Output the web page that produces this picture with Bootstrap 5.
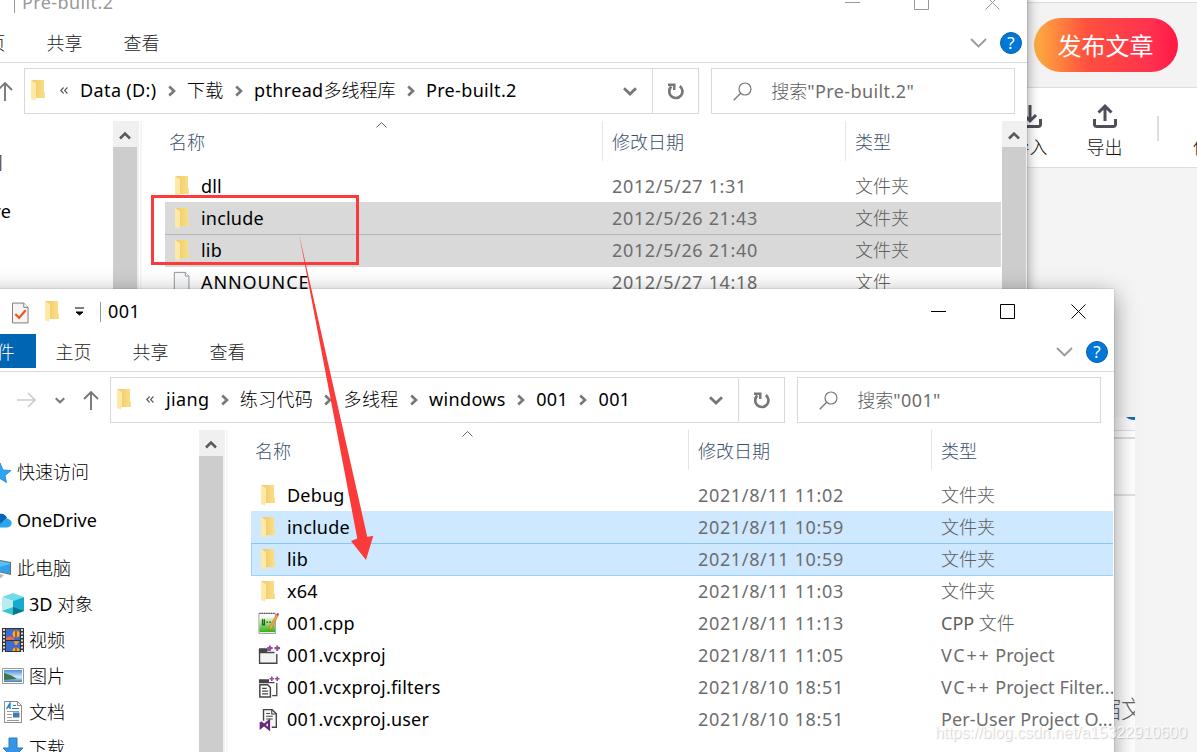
<!DOCTYPE html>
<html lang="zh-CN">
<head>
  <meta charset="utf-8">
  <meta name="viewport" content="width=device-width, initial-scale=1">
  <title>001</title>

  <link href="https://cdn.jsdelivr.net/npm/bootstrap@5.3.3/dist/css/bootstrap.min.css" rel="stylesheet">
  <script src="https://cdn.jsdelivr.net/npm/bootstrap@5.3.3/dist/js/bootstrap.bundle.min.js" defer></script>

  <style>
    body {
      font-family: "Noto Sans", "Noto Sans CJK SC", sans-serif;
      font-size: 18px;
      font-weight: 300;
      line-height: 24px;
      color: #000;
      background: #f4f4f4;
    }
    svg { display: block; flex: none; }
    .desktop { width: 1197px; height: 752px; }

    /* editor page behind the windows */
    .page-strip { background: #fff; }
    .page-top { height: 86px; margin-top: 2px; padding: 15px 19px 0 0; background: #f3f3f3; border-top: 1px solid #ddd; border-bottom: 1px solid #ddd; }
    .btn-publish {
      width: 144px; height: 54px; padding: 0 1px 0 0; border: 0; border-radius: 27px;
      color: #fff; font-size: 24px; font-weight: 400; line-height: 56px;
      background: linear-gradient(90deg, #fcb03f 0, #ff503e 37%, #ff3050 82%, #ff1744 100%);
    }
    .page-tools { height: 80px; background: #fff; border-bottom: 1px solid #ddd; padding-left: 992px; color: #111; }
    .tool-item { width: 75px; padding-top: 16px; flex: none; }
    .tool-item span { line-height: 36px; }
    .tool-line { width: 2px; height: 25px; margin: 28px 34px 0 15px; background: #ddd; flex: none; }
    .back-panel { left: 1100px; top: 417px; width: 35px; height: 335px; background: #fff; overflow: hidden; }
    .back-panel .bar-a { height: 14px; border-bottom: 1px solid #ddd; background: #fafafa; }
    .back-panel .bar-b { height: 8px; border-bottom: 2px solid #ddd; }
    .back-panel .bar-c { height: 57px; border-bottom: 2px solid #e2e2e2; }
    .back-text { font-size: 24px; line-height: 30px; color: #666; margin: 198px 0 0 -3px; }

    /* explorer windows */
    .explorer { width: 1155px; background: #fff; overflow: hidden; }
    .win-back { left: -127px; top: -20px; width: 1154px; height: 600px; box-shadow: 0 2px 12px rgba(0,0,0,.42), 0 0 1px rgba(0,0,0,.5); }
    .win-back > div { margin-right: -1px; }
    .win-front { left: -41px; top: 289px; height: 480px; box-shadow: 0 6px 22px rgba(0,0,0,.42), 0 0 1px rgba(0,0,0,.4); }
    .title-bar { height: 45px; padding: 0 27px 0 53px; }
    .title-bar > svg:first-child { margin-top: 2px; }
    .title-bar .title-text { border-left: 1px solid #999; height: 20px; line-height: 18px; padding-left: 7px; margin-left: 15px; margin-top: 1px; font-weight: 400; letter-spacing: .4px; }
    .win-back .title-bar { color: #999; }
    .win-buttons { gap: 53px; }
    .win-buttons svg:last-child { margin-left: 2px; }
    .tabs-row { height: 38px; border-bottom: 1px solid #d9dadb; color: #222; padding-right: 6px; }
    .tab-cell { width: 77px; height: 34px; line-height: 36px; text-align: center; padding-right: 2px; }
    .tab-file { background: #0065b3; color: #fff; }
    .ribbon-end { padding-top: 7px; }
    .help-dot { width: 22px; height: 22px; border-radius: 50%; background: #0078d7; border: 1px solid #0a5fa5; color: #fff; font-size: 17px; font-weight: 400; line-height: 20px; text-align: center; margin-left: 13px; }
    .address-row { height: 58px; padding: 5px 13px 7px 0; }
    .nav-arrows { width: 151px; padding-left: 58px; gap: 18px; }
    .address-box, .search-box { border: 1px solid #d9d9d9; height: 46px; }
    .address-box { width: 676px; padding-left: 6px; }
    .address-box > svg:first-child { margin-bottom: 1px; }
    .crumbs { gap: 11.2px; line-height: 24px; letter-spacing: .35px; }
    .crumbs span { margin-bottom: 2px; }
    .crumbs .cjk-part { font-weight: 300; letter-spacing: 0; }
    .crumbs .dbl { width: 8px; margin: 0 1px 2px 15px; }
    .refresh-cell { width: 46px; height: 44px; border-left: 1px solid #d9d9d9; padding-left: 15px; margin-left: 15px; }
    .search-box { width: 304px; margin-left: 12px; padding-left: 21px; color: #5d5d5d; gap: 19px; }
    .search-box b { letter-spacing: .4px; color: #6d6d6d; }
    .side-pane { width: 240px; padding-top: 24px; }
    .side-item { height: 36px; gap: 4px; padding-left: 42px; }
    .side-top { padding-left: 29px; margin-bottom: 12px; gap: 5px; }
    .side-last { margin-bottom: 0; }
    .scroll-track { width: 26px; background: #f0f0f0; flex: none; }
    .back-scroll { margin-left: 1px; }
    .scroll-up { height: 26px; padding: 10px 0 0 6px; }
    .scroll-thumb { width: 24px; height: 500px; background: #cdcdcd; }
    .pane-line { width: 2px; margin-left: 1px; background: #f6f6f6; }
    .file-pane { padding-left: 23px; width: 885px; flex: none; }
    .win-back .file-pane { width: 859px; }
    .file-grid { display: grid; grid-template-columns: 437px 243px 1fr; }
    .file-head { height: 40px; line-height: 42px; grid-auto-rows: 40px; color: #3c506e; margin-bottom: 9px; }
    .file-head > div + div { border-left: 1px solid #e5e5e5; padding-left: 9px; }
    .file-head .head-name { padding-left: 4px; position: relative; }
    .sort-mark { position: absolute; left: 211px; top: 1px; }
    .file-row { height: 32px; line-height: 32px; color: #6d6d6d; white-space: nowrap; }
    .file-row .file-name { color: #000; padding-left: 7px; gap: 7px; font-weight: 400; letter-spacing: .2px; }
    .file-row .folder-icon { margin: 0 5px 0 3px; }
    .file-row > div + div { padding-left: 10px; overflow: hidden; }
    .file-row .file-date { letter-spacing: .65px; font-weight: 400; }
    .file-row .file-type { color: #5d5d5d; }
    .file-row .file-type.fw-normal { color: #6d6d6d; letter-spacing: .1px; }
    .wide-text { letter-spacing: 1.7px; }
    .caps-text { letter-spacing: .9px; }
    .row-grey { background: #d9d9d9; }
    .row-blue { background: #cde8ff; }
    .row-focus { box-shadow: inset 0 1px #84c4fb, inset 1px 0 #99d1ff, 0 1px #99d1ff; }
    .row-edge { box-shadow: inset 0 1px #b5b5b5, 0 1px #d9d9d9; }

    /* annotations */
    .red-frame { left: 151px; top: 195px; width: 208px; height: 70px; border: 3px solid #fb3a3a; }
    .red-arrow { left: 0; top: 0; }
    .site-mark { left: 935px; top: 721px; font-family: "Liberation Sans", sans-serif; font-weight: 400; font-size: 15.850px; color: rgba(255,255,255,.8); text-shadow: 1px 1px 1px rgba(120,120,120,.35); white-space: nowrap; }
  </style>
</head>
<body>
  <!-- Shared icons -->
  <svg width="0" height="0" class="position-absolute">
    <linearGradient id="gFold" x1="0" x2="1"><stop offset="0" stop-color="#efca68"/><stop offset="1" stop-color="#fbdf86"/></linearGradient>
    <linearGradient id="gSky" x1="0" x2="0" y1="0" y2="1"><stop offset="0" stop-color="#4b8fe0"/><stop offset=".6" stop-color="#d9ecf8"/><stop offset="1" stop-color="#3a7db5"/></linearGradient>
    <linearGradient id="gGreen" x1="0" x2="0" y1="0" y2="1"><stop offset="0" stop-color="#e8f8d0"/><stop offset="1" stop-color="#33b012"/></linearGradient>
    <symbol id="folder" viewBox="0 0 14 21"><path d="M1 0h12v12l1 1v5H3z" fill="url(#gFold)"/><path d="M0 0l5 3v14l-1 4-4-2z" fill="#ffe9a6"/></symbol>
    <symbol id="crumb" viewBox="0 0 8 12"><path d="M1.2 1.5L6 6 1.2 10.5" fill="none" stroke="#777" stroke-width="2.6"/></symbol>
    <symbol id="dbl" viewBox="0 0 8 7"><path d="M3.6.5L.8 3.5l2.8 3M7.4.5L4.6 3.5l2.8 3" fill="none" stroke="#555" stroke-width="1.1"/></symbol>
    <symbol id="down" viewBox="0 0 14 9"><path d="M1 1.3l6 5.7 6-5.7" fill="none" stroke="#777" stroke-width="2.8"/></symbol>
    <symbol id="reload" viewBox="0 0 17 17"><path d="M11.8 3.1A6.6 6.6 0 1 1 3.300 3.600" fill="none" stroke="#777" stroke-width="2.7"/><path d="M0 .5h7.500v6.500H5V3H0z" fill="#777"/></symbol>
    <symbol id="up" viewBox="0 0 16 20"><path d="M8 20V2M1 9l7-7 7 7" fill="none" stroke="#777" stroke-width="1.9"/></symbol>
    <symbol id="glass" viewBox="0 0 19 19"><circle cx="12" cy="7" r="6" fill="none" stroke="#777" stroke-width="1.2"/><path d="M7.7 11.3L.7 18.3" stroke="#777" stroke-width="1.3"/></symbol>
    <symbol id="ribbon" viewBox="0 0 17 10"><path d="M1 1l7.5 7.5L16 1" fill="none" stroke="#999" stroke-width="1.8"/></symbol>
    <symbol id="scroll" viewBox="0 0 12 9"><path d="M1 7.500l5-5 5 5" fill="none" stroke="#5a5a5a" stroke-width="2.600"/></symbol>
    <symbol id="sort" viewBox="0 0 11 6"><path d="M.5 5.5l5-5 5 5" fill="none" stroke="#666"/></symbol>
    <symbol id="star" viewBox="0 0 24 24"><path d="M12 3l3 7 8 .5-6 5 1.500 7L12 18.500 5.500 22.500 7 15.500 1 10.500l8-.5z" fill="#2fa4f2" stroke="#1982cf" stroke-width=".8"/></symbol>
    <symbol id="cloud" viewBox="0 0 24 24"><path d="M3 14a6 6 0 0 1 5-6 6.500 6.500 0 0 1 11 2l-6 6z" fill="#0b63b8"/><path d="M3 18c-1-5 4-7 8-5l7 6H6z" fill="#1480d8"/><path d="M9 19.500l9-9c7 0 7.500 9 1 9z" fill="#29a6ec"/></symbol>
    <symbol id="pc" viewBox="0 0 24 24"><path d="M2 2l21 4v13L2 14z" fill="#5f6d78"/><path d="M3 3.300l19 3.700v10.500L3 13z" fill="#5cc0f7"/><path d="M3 13L22 8v9.500z" fill="#2fa0ea"/><path d="M8 17l8 2-3 3-8-2z" fill="#b8bec2"/></symbol>
    <symbol id="cube" viewBox="0 0 24 24"><path d="M1 5L12 1l11 4-11 4z" fill="#6fdbe5"/><path d="M1 5l11 4v14L1 19z" fill="#b9ecec"/><path d="M12 9l11-4v14l-11 4z" fill="#16a9d2"/><path d="M1 19l11-4v8z" fill="#35c5d4"/><path d="M12 15l11 4-11 4z" fill="#097689"/></symbol>
    <symbol id="film" viewBox="0 0 24 24"><path d="M1 0h22v24H1z" fill="#333"/><path d="M5 1h14v11H5zM5 13h14v10H5z" fill="#3b6bd0"/><path d="M3 1v23M21 1v23" stroke="#ddd" stroke-width="2" stroke-dasharray="2 1.500"/><path d="M5 10q3-3 6-1l2 1v2H5z" fill="#e86a4b"/><circle cx="15" cy="6" r="3.500" fill="#f2b51d"/><path d="M15 2.500v7" stroke="#cc2f22" stroke-width="1.600"/><path d="M13 13h5l-2 4h-2z" fill="#e0a02c"/><path d="M11.500 23a3.500 3.500 0 0 1 7 0z" fill="#f2b51d"/><path d="M15 19.500v3.500" stroke="#cc2f22" stroke-width="1.500"/></symbol>
    <symbol id="photo" viewBox="0 0 24 24"><path d="M1.500 4.500h21v15h-21z" fill="#fff" stroke="#999"/><path d="M3 6h18v12H3z" fill="url(#gSky)"/><path d="M3 9q8 2 13 6l-13 1z" fill="#3f7350"/></symbol>
    <symbol id="doc" viewBox="0 0 24 24"><path d="M3.500 1.500h13l4 4v17h-17z" fill="#fff" stroke="#8c8c8c"/><path d="M16.500 1.500v4h4" fill="none" stroke="#8c8c8c"/><path d="M5.500 9l3.500-6v6M6.500 7h3" fill="none" stroke="#1b84c8" stroke-width="1.300"/><path d="M12 5.500h3M11 8.500h7" stroke="#1b84c8"/><path d="M6 11.500h12M6 14.500h5M6 17.500h5M6 20.500h12" stroke="#999"/><path d="M12 12.500h6.500v5H12z" fill="#3c7cae"/></symbol>
    <symbol id="load" viewBox="0 0 24 24"><path d="M8 2h8v10h6L12 22 2 12h6z" fill="#3796e8" stroke="#2479c8"/></symbol>
    <symbol id="blank" viewBox="0 0 24 24"><path d="M2.500 1.500h12l4 4v18h-16z" fill="#f7f9fb" stroke="#8c8c8c"/><path d="M14.500 1.500v4h4" fill="#fff" stroke="#8c8c8c"/></symbol>
    <symbol id="cpp" viewBox="0 0 24 24"><path d="M1 1.500h18v22H1z" fill="#fafafa" stroke="#999"/><path d="M1.500 1.500h17" stroke="#555" stroke-width="1.500" stroke-dasharray="1.500 1"/><path d="M1.500 6h17v16h-17z" fill="url(#gGreen)"/><path d="M5 8v6h2V8M9 11h2M12 11h2" fill="none" stroke="#235f14" stroke-width="1.500"/><path d="M20 3l2 1-7 14-3 2 .5-4z" fill="#f0a93e" stroke="#a8641a" stroke-width=".5"/><path d="M20 3l1-2 2 1-1 2z" fill="#a43c58"/></symbol>
    <symbol id="vcx" viewBox="0 0 24 24"><path d="M2.500 8.500h18v12h-18z" fill="#f3f3f3"/><path d="M12 6.500H1.700v14.500h18.800V11" fill="none" stroke="#444" stroke-width="1.500"/><path d="M1 4.500h9v4h8v1.500H1z" fill="#444"/><path d="M13 1.500v6M10 4.500h6M21 1.500v6M18 4.500h6" stroke="#954c9e" stroke-width="2.200"/></symbol>
    <symbol id="filt" viewBox="0 0 24 24"><path d="M1 3.500h11v3h6v1.500H1z" fill="#444"/><path d="M15.500 21.500h5V7.500" fill="none" stroke="#444" stroke-width="1.400"/><path d="M2 9.500h8.500l3 3v10.300H2z" fill="#fff" stroke="#444" stroke-width="1.600"/><path d="M4.500 13.500h5M4.500 16.500h6.500M4.500 19.500h6.500" stroke="#444" stroke-width="1.300"/><path d="M15 .5v5M12.500 3h5M21 .5v5M18.500 3h5" stroke="#954c9e" stroke-width="1.800"/></symbol>
    <symbol id="user" viewBox="0 0 24 24"><path d="M6 14V1.800h9.500l4.500 4.500v14.700h-5" fill="#f6f6f6" stroke="#444" stroke-width="1.500"/><path d="M15 2v4.500h5M9 6h4M9 9h7M9 12h7" fill="none" stroke="#444" stroke-width="1.200"/><path d="M3 15.500v6l9-7.500v9l-9-7.500" fill="none" stroke="#672878" stroke-width="2.400"/></symbol>
    <symbol id="sheet" viewBox="0 0 18 22"><path d="M.5.500h12l4.500 4.500v16.500H.5z" fill="#f5f5f5" stroke="#777"/><path d="M12.500.500v4.500H17" fill="#fff" stroke="#777"/><path d="M3.500 12l4 4 7-8" fill="none" stroke="#ec5a1c" stroke-width="2.400"/></symbol>
  </svg>

  <div class="desktop position-relative overflow-hidden">

    <!-- Editor page -->
    <div class="page-strip overflow-hidden">
      <div class="page-top d-flex justify-content-end align-items-start">
        <button type="button" class="btn-publish">发布文章</button>
      </div>
    </div>
    <div class="page-tools d-flex align-items-start">
      <div class="tool-item d-flex flex-column align-items-center">
        <svg width="24" height="25"><path d="M1.500 15v6a2 2 0 0 0 2 1.500h17a2 2 0 0 0 2-1.500V15M12 1v15M6 11l6 6 6-6" fill="none" stroke="#4f4f5c" stroke-width="3"/></svg>
        <span>导入</span>
      </div>
      <div class="tool-item d-flex flex-column align-items-center">
        <svg width="24" height="25"><path d="M1.500 15v6a2 2 0 0 0 2 1.500h17a2 2 0 0 0 2-1.500V15M12 17V2.500M5.500 8.500L12 2.200 18.500 8.500" fill="none" stroke="#4f4f5c" stroke-width="3"/></svg>
        <span>导出</span>
      </div>
      <div class="tool-line"></div>
      <div class="tool-item"><svg width="24" height="25"></svg><span>保存</span></div>
    </div>
    <div class="back-panel position-absolute">
      <div class="bar-a d-flex justify-content-end"><svg width="9" height="3"><path d="M0 0h9v3Q3 3 0 0z" fill="#0a6ab8"/></svg></div>
      <div class="bar-b"></div>
      <div class="bar-c"></div>
      <div class="back-text text-nowrap">缩文章</div>
    </div>

    <!-- Pre-built.2 window -->
    <div class="explorer win-back position-absolute">
      <div class="title-bar d-flex align-items-center">
        <svg width="17" height="22"><use href="#sheet"/></svg>
        <svg class="ms-3" width="14" height="21"><use href="#folder"/></svg>
        <svg class="ms-3" width="10" height="9"><path d="M0 1h9M1 5h7L4.500 8z" stroke="#000" fill="#000"/></svg>
        <div class="title-text">Pre-built.2</div>
        <div class="win-buttons d-flex align-items-center ms-auto">
          <svg width="16" height="16"><path d="M0 7.500h15" stroke="#999"/></svg>
          <svg width="16" height="16"><path d="M.5.500h14v14H.5z" fill="none" stroke="#999"/></svg>
          <svg width="16" height="16"><path d="M.5.500l14 14m0-14l-14 14" stroke="#999"/></svg>
        </div>
      </div>
      <div class="tabs-row d-flex align-items-start">
        <div class="tab-cell tab-file">文件</div>
        <div class="tab-cell">主页</div>
        <div class="tab-cell">共享</div>
        <div class="tab-cell">查看</div>
        <div class="ribbon-end d-flex align-items-center ms-auto">
          <svg width="17" height="10"><use href="#ribbon"/></svg>
          <div class="help-dot">?</div>
        </div>
      </div>
      <div class="address-row d-flex">
        <div class="nav-arrows d-flex align-items-center">
          <svg width="20" height="16"><path d="M0 8h18M11 1l7 7-7 7" fill="none" stroke="#ccc" stroke-width="1.700"/></svg>
          <svg width="10" height="7"><use href="#down"/></svg>
          <svg width="16" height="20"><use href="#up"/></svg>
        </div>
        <div class="address-box d-flex align-items-center">
          <svg width="14" height="21"><use href="#folder"/></svg>
          <div class="crumbs d-flex align-items-center">
            <svg class="dbl" width="8" height="7"><use href="#dbl"/></svg>
            <span class="fw-normal">Data (D:)</span>
            <svg width="8" height="12"><use href="#crumb"/></svg>
            <span>下载</span>
            <svg width="8" height="12"><use href="#crumb"/></svg>
            <span class="fw-normal">pthread<span class="cjk-part">多线程库</span></span>
            <svg width="8" height="12"><use href="#crumb"/></svg>
            <span class="fw-normal">Pre-built.2</span>
          </div>
          <svg class="ms-auto" width="14" height="9"><use href="#down"/></svg>
          <div class="refresh-cell d-flex align-items-center"><svg width="17" height="17"><use href="#reload"/></svg></div>
        </div>
        <div class="search-box d-flex align-items-center">
          <svg width="19" height="19"><use href="#glass"/></svg>
          <span>搜索<b class="fw-normal">"Pre-built.2"</b></span>
        </div>
      </div>
      <div class="d-flex">
        <div class="side-pane">
          <div class="side-item side-top d-flex align-items-center"><svg width="24" height="24"><use href="#star"/></svg>快速访问</div>
          <div class="side-item side-top fw-normal d-flex align-items-center"><svg width="24" height="24"><use href="#cloud"/></svg>OneDrive</div>
        </div>
        <div class="scroll-track">
          <div class="scroll-up"><svg width="12" height="9"><use href="#scroll"/></svg></div>
          <div class="scroll-thumb"></div>
        </div>
        <div class="pane-line"></div>
        <div class="file-pane">
          <div class="file-grid file-head">
            <div class="head-name">名称<svg class="sort-mark" width="11" height="6"><use href="#sort"/></svg></div>
            <div>修改日期</div>
            <div>类型</div>
          </div>
          <div class="file-list">
            <div class="file-grid file-row">
              <div class="file-name d-flex align-items-center"><svg class="folder-icon" width="14" height="21"><use href="#folder"/></svg>dll</div>
              <div class="file-date">2012/5/27 1:31</div>
              <div class="file-type">文件夹</div>
            </div>
            <div class="file-grid file-row row-grey">
              <div class="file-name d-flex align-items-center"><svg class="folder-icon" width="14" height="21"><use href="#folder"/></svg>include</div>
              <div class="file-date">2012/5/26 21:43</div>
              <div class="file-type">文件夹</div>
            </div>
            <div class="file-grid file-row row-grey row-edge">
              <div class="file-name d-flex align-items-center"><svg class="folder-icon" width="14" height="21"><use href="#folder"/></svg>lib</div>
              <div class="file-date">2012/5/26 21:40</div>
              <div class="file-type">文件夹</div>
            </div>
            <div class="file-grid file-row">
              <div class="file-name d-flex align-items-center"><svg width="22" height="24"><use href="#blank"/></svg><span class="caps-text">ANNOUNCE</span></div>
              <div class="file-date">2012/5/27 14:18</div>
              <div class="file-type">文件</div>
            </div>
          </div>
        </div>
        <div class="scroll-track back-scroll">
          <div class="scroll-up"><svg width="12" height="9"><use href="#scroll"/></svg></div>
          <div class="scroll-thumb"></div>
        </div>
      </div>
    </div>

    <!-- 001 window -->
    <div class="explorer win-front position-absolute">
      <div class="title-bar d-flex align-items-center">
        <svg width="17" height="22"><use href="#sheet"/></svg>
        <svg class="ms-3" width="14" height="21"><use href="#folder"/></svg>
        <svg class="ms-3" width="10" height="9"><path d="M0 1h9M1 5h7L4.500 8z" stroke="#000" fill="#000"/></svg>
        <div class="title-text">001</div>
        <div class="win-buttons d-flex align-items-center ms-auto">
          <svg width="16" height="16"><path d="M0 7.500h15" stroke="#000"/></svg>
          <svg width="16" height="16"><path d="M.5.500h14v14H.5z" fill="none" stroke="#000"/></svg>
          <svg width="16" height="16"><path d="M.5.500l14 14m0-14l-14 14" stroke="#000"/></svg>
        </div>
      </div>
      <div class="tabs-row d-flex align-items-start">
        <div class="tab-cell tab-file">文件</div>
        <div class="tab-cell">主页</div>
        <div class="tab-cell">共享</div>
        <div class="tab-cell">查看</div>
        <div class="ribbon-end d-flex align-items-center ms-auto">
          <svg width="17" height="10"><use href="#ribbon"/></svg>
          <div class="help-dot">?</div>
        </div>
      </div>
      <div class="address-row d-flex">
        <div class="nav-arrows d-flex align-items-center">
          <svg width="20" height="16"><path d="M0 8h18M11 1l7 7-7 7" fill="none" stroke="#ccc" stroke-width="1.700"/></svg>
          <svg width="10" height="7"><use href="#down"/></svg>
          <svg width="16" height="20"><use href="#up"/></svg>
        </div>
        <div class="address-box d-flex align-items-center">
          <svg width="14" height="21"><use href="#folder"/></svg>
          <div class="crumbs d-flex align-items-center">
            <svg class="dbl" width="8" height="7"><use href="#dbl"/></svg>
            <span class="fw-normal">jiang</span>
            <svg width="8" height="12"><use href="#crumb"/></svg>
            <span>练习代码</span>
            <svg width="8" height="12"><use href="#crumb"/></svg>
            <span>多线程</span>
            <svg width="8" height="12"><use href="#crumb"/></svg>
            <span class="fw-normal">windows</span>
            <svg width="8" height="12"><use href="#crumb"/></svg>
            <span class="fw-normal">001</span>
            <svg width="8" height="12"><use href="#crumb"/></svg>
            <span class="fw-normal">001</span>
          </div>
          <svg class="ms-auto" width="14" height="9"><use href="#down"/></svg>
          <div class="refresh-cell d-flex align-items-center"><svg width="17" height="17"><use href="#reload"/></svg></div>
        </div>
        <div class="search-box d-flex align-items-center">
          <svg width="19" height="19"><use href="#glass"/></svg>
          <span>搜索<b class="fw-normal">"001"</b></span>
        </div>
      </div>
      <div class="d-flex">
        <div class="side-pane">
          <div class="side-item side-top d-flex align-items-center"><svg width="24" height="24"><use href="#star"/></svg>快速访问</div>
          <div class="side-item side-top fw-normal d-flex align-items-center"><svg width="24" height="24"><use href="#cloud"/></svg>OneDrive</div>
          <div class="side-item side-top side-last d-flex align-items-center"><svg width="24" height="24"><use href="#pc"/></svg>此电脑</div>
          <div class="side-item d-flex align-items-center"><svg width="24" height="24"><use href="#cube"/></svg><span><span class="fw-normal">3D </span> 对象</span></div>
          <div class="side-item d-flex align-items-center"><svg width="24" height="24"><use href="#film"/></svg>视频</div>
          <div class="side-item d-flex align-items-center"><svg width="24" height="24"><use href="#photo"/></svg>图片</div>
          <div class="side-item d-flex align-items-center"><svg width="24" height="24"><use href="#doc"/></svg>文档</div>
          <div class="side-item d-flex align-items-center"><svg width="24" height="24"><use href="#load"/></svg>下载</div>
        </div>
        <div class="scroll-track">
          <div class="scroll-up"><svg width="12" height="9"><use href="#scroll"/></svg></div>
          <div class="scroll-thumb"></div>
        </div>
        <div class="pane-line"></div>
        <div class="file-pane">
          <div class="file-grid file-head">
            <div class="head-name">名称<svg class="sort-mark" width="11" height="6"><use href="#sort"/></svg></div>
            <div>修改日期</div>
            <div>类型</div>
          </div>
          <div class="file-list">
            <div class="file-grid file-row">
              <div class="file-name d-flex align-items-center"><svg class="folder-icon" width="14" height="21"><use href="#folder"/></svg>Debug</div>
              <div class="file-date">2021/8/11 11:02</div>
              <div class="file-type">文件夹</div>
            </div>
            <div class="file-grid file-row row-blue">
              <div class="file-name d-flex align-items-center"><svg class="folder-icon" width="14" height="21"><use href="#folder"/></svg>include</div>
              <div class="file-date">2021/8/11 10:59</div>
              <div class="file-type">文件夹</div>
            </div>
            <div class="file-grid file-row row-blue row-focus">
              <div class="file-name d-flex align-items-center"><svg class="folder-icon" width="14" height="21"><use href="#folder"/></svg>lib</div>
              <div class="file-date">2021/8/11 10:59</div>
              <div class="file-type">文件夹</div>
            </div>
            <div class="file-grid file-row">
              <div class="file-name d-flex align-items-center"><svg class="folder-icon" width="14" height="21"><use href="#folder"/></svg>x64</div>
              <div class="file-date">2021/8/11 11:03</div>
              <div class="file-type">文件夹</div>
            </div>
            <div class="file-grid file-row">
              <div class="file-name d-flex align-items-center"><svg width="22" height="24"><use href="#cpp"/></svg>001.cpp</div>
              <div class="file-date">2021/8/11 11:13</div>
              <div class="file-type"><span class="fw-normal">CPP</span> 文件</div>
            </div>
            <div class="file-grid file-row">
              <div class="file-name d-flex align-items-center"><svg width="22" height="24"><use href="#vcx"/></svg>001.vcxproj</div>
              <div class="file-date">2021/8/11 11:05</div>
              <div class="file-type fw-normal"><span class="wide-text">VC++</span> Project</div>
            </div>
            <div class="file-grid file-row">
              <div class="file-name d-flex align-items-center"><svg width="22" height="24"><use href="#filt"/></svg>001.vcxproj.filters</div>
              <div class="file-date">2021/8/10 18:51</div>
              <div class="file-type fw-normal"><span class="wide-text">VC++</span> Project Filter...</div>
            </div>
            <div class="file-grid file-row">
              <div class="file-name d-flex align-items-center"><svg width="22" height="24"><use href="#user"/></svg>001.vcxproj.user</div>
              <div class="file-date">2021/8/10 18:51</div>
              <div class="file-type fw-normal">Per-User Project O...</div>
            </div>
          </div>
        </div>
      </div>
    </div>

    <!-- Annotations -->
    <div class="red-frame position-absolute"></div>
    <svg class="red-arrow position-absolute" width="400" height="570"><path d="M299 234L357.300 538.500 351 541l15 19 7.300-24.300-6 1.300z" fill="#fb3a3a"/></svg>
    <div class="site-mark position-absolute">https://blog.csdn.net/a15322910600</div>
  </div>
</body>
</html>
